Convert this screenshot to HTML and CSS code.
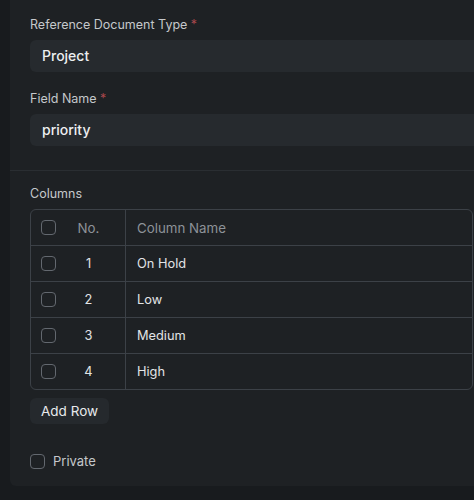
FILE: index.html
```html
<!DOCTYPE html>
<html>
<head>
<meta charset="utf-8">
<link rel="stylesheet" href="styles.css">
</head>
<body>
<div class="panel">
  <div class="section">
    <div class="field">
      <div class="label">Reference Document Type <span class="req">*</span></div>
      <div class="input">Project</div>
    </div>
    <div class="field field-next">
      <div class="label">Field Name <span class="req">*</span></div>
      <div class="input">priority</div>
    </div>
  </div>
  <div class="section section-cols">
    <div class="label">Columns</div>
    <div class="table">
      <div class="row head">
        <div class="c-check"><span class="box"></span></div>
        <div class="c-no">No.</div>
        <div class="c-name">Column Name</div>
      </div>
      <div class="row">
        <div class="c-check"><span class="box"></span></div>
        <div class="c-no">1</div>
        <div class="c-name">On Hold</div>
      </div>
      <div class="row">
        <div class="c-check"><span class="box"></span></div>
        <div class="c-no">2</div>
        <div class="c-name">Low</div>
      </div>
      <div class="row">
        <div class="c-check"><span class="box"></span></div>
        <div class="c-no">3</div>
        <div class="c-name">Medium</div>
      </div>
      <div class="row">
        <div class="c-check"><span class="box"></span></div>
        <div class="c-no">4</div>
        <div class="c-name">High</div>
      </div>
    </div>
    <button class="btn">Add Row</button>
    <label class="private"><span class="box box-lg"></span><span>Private</span></label>
  </div>
</div>
</body>
</html>
```
FILE: styles.css
```css
html, body {
  margin: 0;
  padding: 0;
  background: #181b1e;
  width: 474px;
  height: 500px;
  overflow: hidden;
  font-family: Inter, "Noto Sans", sans-serif;
}
.panel {
  margin-left: 10px;
  width: 484px;
  background: #1e2124;
  border-bottom-left-radius: 6px;
}
.section {
  padding: 16px 20px 24px 20px;
}
.section-cols {
  border-top: 1px solid #2a2e32;
  padding-top: 14px;
  padding-bottom: 15px;
}
.label {
  font-size: 12.5px;
  line-height: 18px;
  color: #c5c8cb;
  margin-bottom: 6px;
}
.req {
  color: #a8474c;
}
.field-next {
  margin-top: 18px;
}
.input {
  height: 32px;
  line-height: 32px;
  background: #262a2e;
  border-radius: 6px 0 0 6px;
  padding-left: 12px;
  font-size: 14px;
  font-weight: 500;
  color: #eceef0;
}
.table {
  width: 441px;
  border: 1px solid #3c4147;
  border-radius: 6px;
}
.row {
  display: flex;
  height: 35px;
  border-top: 1px solid #3c4147;
  font-size: 12.8px;
  color: #e2e4e6;
}
.row.head {
  border-top: none;
  color: #8d9298;
  font-size: 13.3px;
}
.c-check {
  width: 15px;
  padding-left: 10px;
  display: flex;
  align-items: center;
}
.c-no {
  width: 65px;
  padding-right: 4px;
  display: flex;
  align-items: center;
  justify-content: center;
  border-right: 1px solid #3c4147;
}
.c-name {
  flex: 1;
  display: flex;
  align-items: center;
  padding-left: 11px;
}
.box {
  display: inline-block;
  box-sizing: border-box;
  width: 15px;
  height: 15px;
  border: 1px solid #63686f;
  border-radius: 4px;
}
.box-lg {
  width: 15px;
  height: 15px;
}
.btn {
  display: block;
  margin-top: 8px;
  height: 26px;
  padding: 0 11px;
  border: none;
  border-radius: 6px;
  background: #25292d;
  color: #e8eaec;
  font-family: Inter, "Noto Sans", sans-serif;
  font-size: 13.5px;
}
.private {
  display: flex;
  align-items: center;
  gap: 8px;
  margin-top: 27px;
  height: 20px;
  font-size: 13px;
  color: #c5c8cb;
}
```
